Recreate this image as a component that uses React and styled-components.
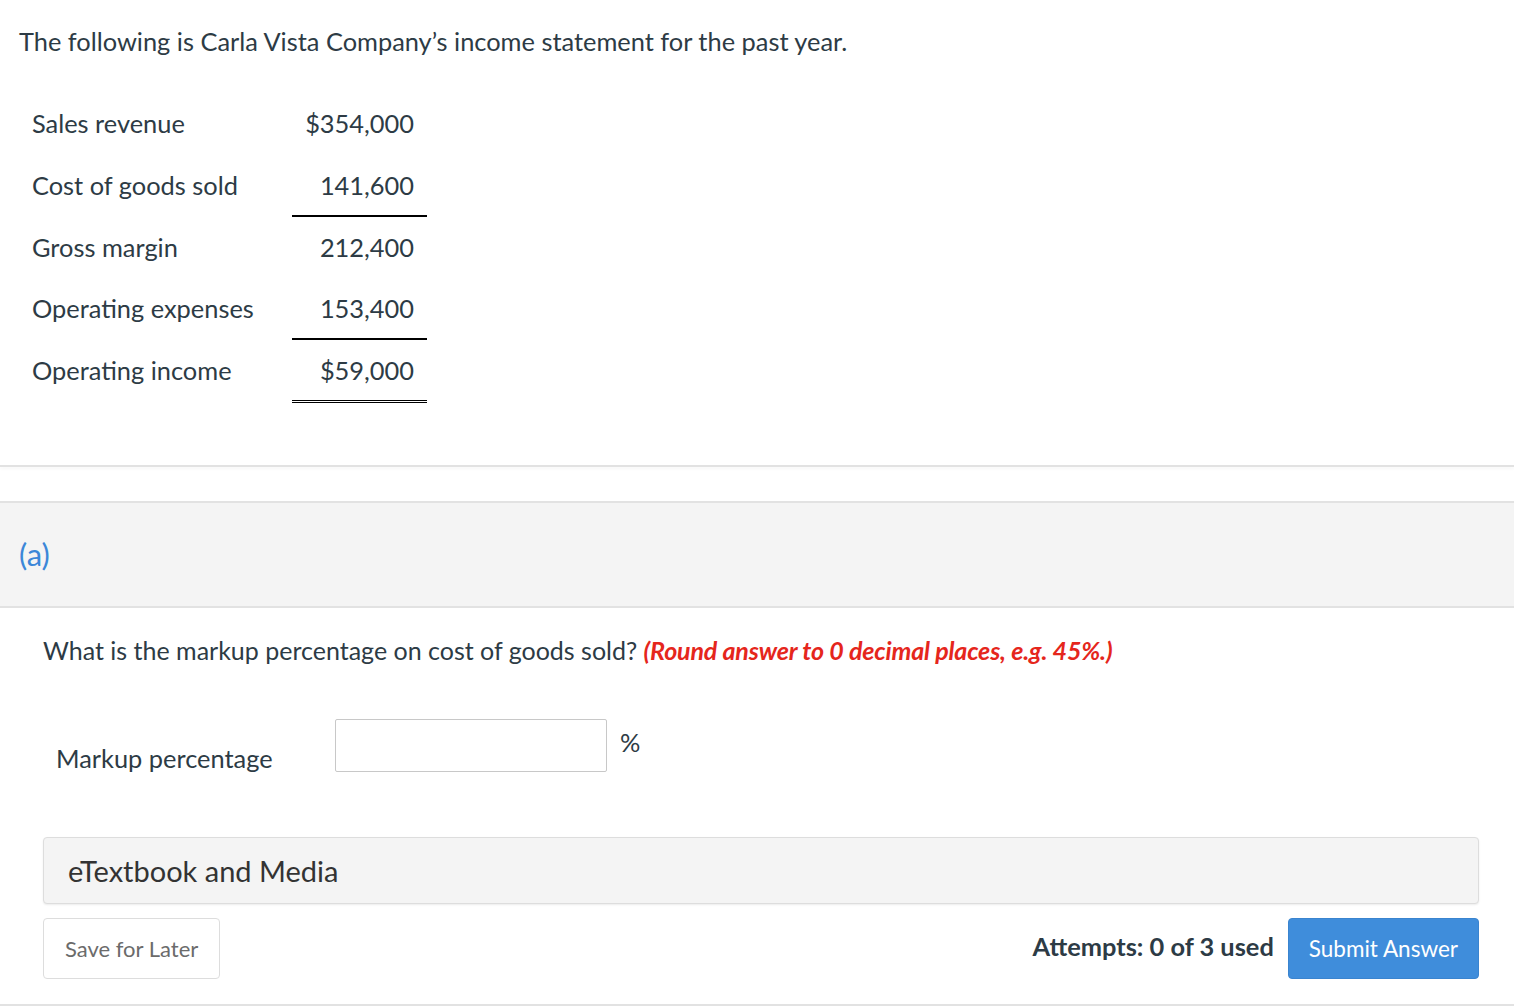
import React from 'react'
import styled, { createGlobalStyle } from 'styled-components'

const Global = createGlobalStyle`
    html, body {
        margin: 0;
        padding: 0;
        background: #ffffff;
        font-family: Lato, "Open Sans", sans-serif;
        color: #2d3b45;
    }
`

const Page = styled.div`
    width: 1514px;
`

const Intro = styled.div`
    padding: 24px 19px 0;
`

const IntroText = styled.p`
    margin: 0;
    font-size: 25.4px;
    line-height: 34px;
`

const Statement = styled.div`
    display: grid;
    grid-template-columns: 260px 135px;
    margin: 35px 0 0 32px;
`

const Label = styled.div`
    font-size: 25.4px;
    line-height: 30px;
    padding: 15px 0 14.75px;
    border-bottom: 2px solid transparent;
`

const Amount = styled.div`
    font-size: 25.4px;
    line-height: 30px;
    padding: 15px 13px 14.75px 0;
    text-align: right;
    border-bottom: ${props => props.rule === 'single' ? '2px solid #000' : props.rule === 'double' ? '3px double #000' : '2px solid transparent'};
`

const Divider = styled.div`
    margin-top: 62px;
    height: 2px;
    background: #e2e2e2;
    box-shadow: 0 2px 3px rgba(0, 0, 0, 0.04);
`

const PartHeader = styled.div`
    margin-top: 34px;
    height: 103px;
    display: flex;
    align-items: center;
    padding-left: 19px;
    background: #f4f4f4;
    border-top: 2px solid #e2e2e2;
    border-bottom: 2px solid #e2e2e2;
    color: #3c87d8;
    font-size: 31px;
`

const Body = styled.div`
    padding: 25px 35px 0 43px;
`

const Question = styled.p`
    margin: 0;
    font-size: 25px;
    line-height: 34px;
`

const Hint = styled.span`
    color: #e5261c;
    font-weight: 700;
    font-style: italic;
    letter-spacing: -0.15px;
`

const AnswerRow = styled.div`
    display: flex;
    align-items: flex-start;
    margin-top: 52px;
    padding-left: 13px;
`

const AnswerLabel = styled.div`
    width: 279px;
    font-size: 25.4px;
    line-height: 30px;
    padding-top: 24px;
`

const Input = styled.input`
    box-sizing: border-box;
    width: 272px;
    height: 53px;
    border: 1px solid #c8c8c8;
    border-radius: 2px;
    background: #fff;
    font: inherit;
    font-size: 22px;
    padding: 0 10px;
    outline: none;
`

const Unit = styled.span`
    font-size: 25.4px;
    line-height: 30px;
    margin: 8px 0 0 13px;
`

const Media = styled.div`
    margin-top: 64px;
    height: 65px;
    display: flex;
    align-items: center;
    padding-left: 24px;
    background: #f4f4f4;
    border: 1px solid #dddddd;
    border-radius: 4px;
    box-shadow: 0 1px 2px rgba(0, 0, 0, 0.08);
    font-size: 29px;
    color: #333333;
`

const Actions = styled.div`
    display: flex;
    align-items: center;
    margin-top: 14px;
    gap: 14px;
`

const SaveButton = styled.button`
    height: 61px;
    padding: 0 21px;
    background: #fff;
    border: 1px solid #dddddd;
    border-radius: 4px;
    font-family: inherit;
    font-size: 22px;
    color: #6b6b6b;
`

const Attempts = styled.span`
    margin-left: auto;
    margin-bottom: 5px;
    font-size: 25.4px;
    font-weight: 700;
    color: #2d3b45;
`

const SubmitButton = styled.button`
    height: 61px;
    padding: 0 20px;
    background: #3f8ddb;
    border: 1px solid #3a84cf;
    border-radius: 4px;
    font-family: inherit;
    font-size: 22.5px;
    color: #ffffff;
`

const Bottom = styled.div`
    margin-top: 25px;
    height: 2px;
    background: #e2e2e2;
`

const rows = [
    ['Sales revenue', '$354,000', null],
    ['Cost of goods sold', '141,600', 'single'],
    ['Gross margin', '212,400', null],
    ['Operating expenses', '153,400', 'single'],
    ['Operating income', '$59,000', 'double'],
]

const App = () => (
    <Page>
        <Global />
        <Intro>
            <IntroText>The following is Carla Vista Company’s income statement for the past year.</IntroText>
        </Intro>
        <Statement>
            {rows.map(([label, value, rule]) => (
                <React.Fragment key={label}>
                    <Label>{label}</Label>
                    <Amount rule={rule}>{value}</Amount>
                </React.Fragment>
            ))}
        </Statement>
        <Divider />
        <PartHeader>(a)</PartHeader>
        <Body>
            <Question>
                What is the markup percentage on cost of goods sold? <Hint>(Round answer to 0 decimal places, e.g. 45%.)</Hint>
            </Question>
            <AnswerRow>
                <AnswerLabel>Markup percentage</AnswerLabel>
                <Input type="text" />
                <Unit>%</Unit>
            </AnswerRow>
            <Media>eTextbook and Media</Media>
            <Actions>
                <SaveButton>Save for Later</SaveButton>
                <Attempts>Attempts: 0 of 3 used</Attempts>
                <SubmitButton>Submit Answer</SubmitButton>
            </Actions>
        </Body>
        <Bottom />
    </Page>
)

export default App
